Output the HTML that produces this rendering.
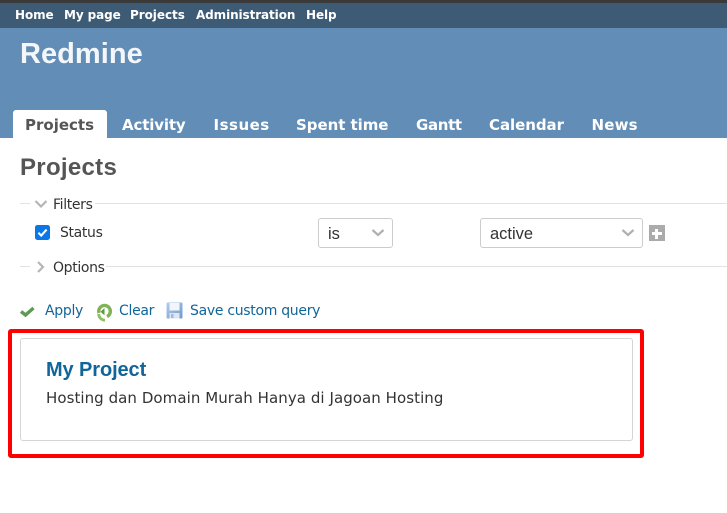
<!DOCTYPE html>
<html><head><meta charset="utf-8"><title>Redmine</title>
<style>
html,body{margin:0;padding:0;background:#fff;width:727px;height:513px;overflow:hidden}
body{position:relative;font-family:"DejaVu Sans","Liberation Sans",sans-serif;color:#333}
.a{position:absolute;white-space:nowrap}
.top{font-weight:bold;font-size:12px;color:#fff;top:8px;line-height:15px;letter-spacing:-.1px}
.tab{font-weight:bold;font-size:15px;color:#fff;top:116px;line-height:18px;letter-spacing:-.15px}
.lbl{font-size:14px;line-height:17px;letter-spacing:-.35px}
.lnk{font-size:14px;line-height:17px;color:#169;letter-spacing:-.3px;top:303px}
.sel{box-sizing:border-box;border:1px solid #ccc;border-radius:3px;height:30px;top:218px;background:#fff}
.sel span{position:absolute;left:9px;top:6px;font:16.5px/18px "Liberation Sans",sans-serif;color:#333}
.line{height:1px;background:#e2e2e2}
</style></head><body>
<div class="a" style="left:0;top:0;width:727px;height:3px;background:#3a3a3a"></div>
<div class="a" style="left:0;top:3px;width:727px;height:25px;background:#3e5b76"></div>
<div class="a" style="left:0;top:28px;width:727px;height:110px;background:#628db6"></div>

<div class="a top" style="left:15px">Home</div>
<div class="a top" style="left:64px">My page</div>
<div class="a top" style="left:130px;letter-spacing:-.05px">Projects</div>
<div class="a top" style="left:196px">Administration</div>
<div class="a top" style="left:306px">Help</div>

<div class="a" style="left:20px;top:36px;font:bold 29px/36px 'Liberation Sans',sans-serif;color:#f4f7fa;letter-spacing:.05px">Redmine</div>

<div class="a" style="left:13px;top:110px;width:94px;height:28px;background:#fff;border-radius:3px 3px 0 0"></div>
<div class="a tab" style="left:25px;color:#555;letter-spacing:0">Projects</div>
<div class="a tab" style="left:122px">Activity</div>
<div class="a tab" style="left:213.5px;letter-spacing:.5px">Issues</div>
<div class="a tab" style="left:296px;letter-spacing:-.05px">Spent time</div>
<div class="a tab" style="left:416px;letter-spacing:-.35px">Gantt</div>
<div class="a tab" style="left:489px;letter-spacing:-.05px">Calendar</div>
<div class="a tab" style="left:591.5px;letter-spacing:.2px">News</div>

<div class="a" style="left:20px;top:153px;font:bold 24px/30px 'Liberation Sans',sans-serif;color:#555;letter-spacing:.3px">Projects</div>

<div class="a line" style="left:20px;top:203px;width:10px"></div>
<svg class="a" style="left:34px;top:198px" width="14" height="12" viewBox="0 0 14 12"><path d="M1.5 3 L7 8.5 L12.5 3" fill="none" stroke="#b5b5b5" stroke-width="2.2"/></svg>
<div class="a lbl" style="left:53px;top:197px">Filters</div>
<div class="a line" style="left:95px;top:203px;width:632px"></div>

<div class="a" style="left:35px;top:225px;width:15px;height:15px;background:#0b76e8;border-radius:2.5px"></div>
<svg class="a" style="left:35px;top:225px" width="15" height="15" viewBox="0 0 15 15"><path d="M3.4 7.8 L6.2 10.6 L11.6 4.6" fill="none" stroke="#fff" stroke-width="2.1"/></svg>
<div class="a lbl" style="left:60px;top:225px">Status</div>

<div class="a sel" style="left:318px;width:75px"><span>is</span>
<svg class="a" style="left:52px;top:9px" width="14" height="10" viewBox="0 0 14 10"><path d="M1.5 2 L7 7 L12.5 2" fill="none" stroke="#b0b0b0" stroke-width="2.2"/></svg></div>
<div class="a sel" style="left:480px;width:163px"><span>active</span>
<svg class="a" style="left:140px;top:9px" width="14" height="10" viewBox="0 0 14 10"><path d="M1.5 2 L7 7 L12.5 2" fill="none" stroke="#b0b0b0" stroke-width="2.2"/></svg></div>
<div class="a" style="left:649px;top:225px;width:16px;height:16px;background:#ababab"></div>
<div class="a" style="left:652px;top:232px;width:10px;height:3px;background:#fff"></div>
<div class="a" style="left:655px;top:229px;width:3px;height:10px;background:#fff"></div>

<div class="a line" style="left:20px;top:266px;width:10px"></div>
<svg class="a" style="left:34px;top:260px" width="12" height="14" viewBox="0 0 12 14"><path d="M4 2 L9 7 L4 12" fill="none" stroke="#b5b5b5" stroke-width="2.2"/></svg>
<div class="a lbl" style="left:53px;top:260px">Options</div>
<div class="a line" style="left:106px;top:266px;width:621px"></div>

<svg class="a" style="left:19px;top:303px" width="17" height="15" viewBox="0 0 17 15"><path d="M2 8.5 L6.5 12 L14.5 5" fill="none" stroke="#5f9a55" stroke-width="3.4"/></svg>
<div class="a lnk" style="left:45px">Apply</div>
<svg class="a" style="left:95px;top:302px" width="18" height="20" viewBox="0 0 18 20"><path d="M4 11 A5.8 5.8 0 1 1 12 14.5" fill="none" stroke="#7fb455" stroke-width="3.4"/><path d="M9.5 6 L5.5 9.8 L9.5 13.2 Z" fill="#5d9c3c"/><path d="M3.6 12 A6.5 6.5 0 0 0 10 18.2" fill="none" stroke="#8dc264" stroke-width="2.8"/></svg>
<div class="a lnk" style="left:119px">Clear</div>
<svg class="a" style="left:166px;top:302px" width="17" height="17" viewBox="0 0 17 17"><defs><linearGradient id="g" x1="0" y1="0" x2="1" y2="1"><stop offset="0" stop-color="#b4cdea"/><stop offset="1" stop-color="#6f9acd"/></linearGradient></defs><rect x=".5" y=".5" width="16" height="16" rx="1" fill="url(#g)"/><rect x="3.5" y="1" width="10" height="7.5" fill="#f2f6fb"/><rect x="3.5" y="11" width="10" height="5.5" fill="#dde6f1"/><rect x="5" y="12" width="2.5" height="4" fill="#9dbbdd"/></svg>
<div class="a lnk" style="left:190px">Save custom query</div>

<div class="a" style="box-sizing:border-box;left:8px;top:329px;width:636px;height:129px;border:4px solid #f00;border-radius:3px"></div>
<div class="a" style="box-sizing:border-box;left:20px;top:338px;width:613px;height:103px;border:1px solid #d5d5d5;border-radius:3px"></div>
<div class="a" style="left:46px;top:358px;font:bold 20px/24px 'Liberation Sans',sans-serif;color:#169;letter-spacing:-.1px">My Project</div>
<div class="a" style="left:46px;top:390px;font-size:15px;line-height:17px;color:#333;letter-spacing:.06px">Hosting dan Domain Murah Hanya di Jagoan Hosting</div>
</body></html>
